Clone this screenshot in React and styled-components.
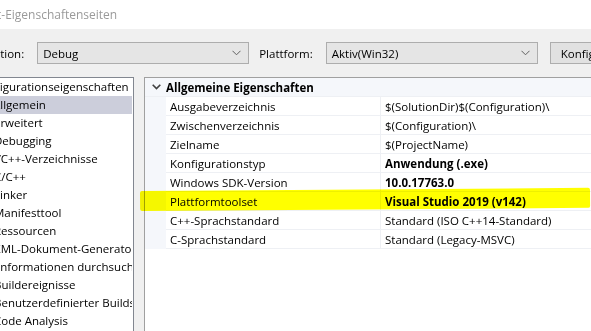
import styled, { createGlobalStyle } from "styled-components";

const GlobalStyle = createGlobalStyle`
  html, body {
    margin: 0;
    padding: 0;
    overflow: hidden;
    background: #ffffff;
  }
  * { box-sizing: border-box; }
`;

const Window = styled.div`
  position: relative;
  width: 591px;
  height: 331px;
  overflow: hidden;
  display: flex;
  flex-direction: column;
  font-family: "Open Sans", "Noto Sans", sans-serif;
  font-size: 11.5px;
  color: #000;
  background: #f0f0f0;
`;

const TitleBar = styled.div`
  height: 29px;
  flex: none;
  background: #fff;
  color: #9a9a9a;
  font-size: 12px;
  display: flex;
  align-items: center;
  white-space: nowrap;
  padding-bottom: 1px;
  overflow: hidden;
`;

const TitleText = styled.span`
  margin-left: -3px;
`;

const Toolbar = styled.div`
  height: 48px;
  flex: none;
  display: flex;
  align-items: center;
  white-space: nowrap;
`;

const Label = styled.span`
  margin-left: ${({ $shift }) => $shift || 0}px;
  margin-right: ${({ $gap }) => $gap}px;
`;

const Select = styled.div`
  width: 212px;
  height: 22px;
  flex: none;
  background: #e5e5e5;
  border: 1px solid #adadad;
  display: flex;
  align-items: center;
  justify-content: space-between;
  padding: 0 7px 0 5px;
  margin-right: ${({ $gap }) => $gap}px;
`;

const Button = styled.div`
  width: 80px;
  height: 22px;
  flex: none;
  background: #e1e1e1;
  border: 1px solid #adadad;
  display: flex;
  align-items: center;
  padding-left: 10px;
  overflow: hidden;
`;

const Body = styled.div`
  flex: 1;
  display: flex;
  gap: 10px;
  min-height: 0;
`;

const Tree = styled.div`
  width: 134px;
  flex: none;
  background: #fff;
  border-top: 1px solid #828790;
  border-right: 1px solid #828790;
  overflow: hidden;
  white-space: nowrap;
`;

const TreeItem = styled.div`
  height: 18px;
  line-height: 18px;
  text-indent: ${({ $indent }) => $indent}px;
  background: ${({ $selected }) => ($selected ? "#cccedb" : "transparent")};
  margin-right: 1px;
  overflow: hidden;
`;

const Grid = styled.div`
  flex: 1;
  background: #fff;
  border-top: 1px solid #a0a0a0;
  border-left: 1px solid #a0a0a0;
  display: flex;
  flex-direction: column;
  white-space: nowrap;
  overflow: hidden;
`;

const Category = styled.div`
  height: 19px;
  display: flex;
  align-items: center;
  background: #f5f7fb;
  font-weight: 700;
  border-bottom: 1px solid #eef0f4;
`;

const Caret = styled.div`
  width: 21px;
  display: flex;
  justify-content: center;
  padding-left: 2px;
`;

const Row = styled.div`
  height: 19px;
  display: flex;
  background: #f5f7fb;
`;

const Gutter = styled.div`
  width: 21px;
  flex: none;
`;

const Cell = styled.div`
  width: ${({ $w }) => ($w ? `${$w}px` : "auto")};
  flex: ${({ $w }) => ($w ? "none" : "1")};
  background: #fff;
  border-bottom: 1px solid #eef0f4;
  border-right: ${({ $sep }) => ($sep ? "1px solid #eef0f4" : "none")};
  padding-left: 4px;
  display: flex;
  align-items: center;
  font-weight: ${({ $bold }) => ($bold ? 700 : 400)};
`;

const Highlight = styled.div`
  position: absolute;
  left: 140px;
  top: 191px;
  width: 450px;
  height: 20px;
  background: #ffff00;
  mix-blend-mode: multiply;
  transform: rotate(-0.4deg);
  transform-origin: left top;
  border-radius: 2px;
  pointer-events: none;
`;

const Chevron = () => (
  <svg width="9" height="6" viewBox="0 0 9 6">
    <polyline points="0.5,0.8 4.5,4.8 8.5,0.8" fill="none" stroke="#606060" strokeWidth="1" />
  </svg>
);

const CaretIcon = () => (
  <svg width="9" height="6" viewBox="0 0 9 6">
    <polyline points="0.7,0.8 4.5,4.6 8.3,0.8" fill="none" stroke="#404040" strokeWidth="1.6" />
  </svg>
);

const treeItems = [
  { text: "Konfigurationseigenschaften", indent: -25 },
  { text: "Allgemein", indent: -7, selected: true },
  { text: "Erweitert", indent: -6 },
  { text: "Debugging", indent: -6 },
  { text: "VC++-Verzeichnisse", indent: -6 },
  { text: "C/C++", indent: -6 },
  { text: "Linker", indent: -6 },
  { text: "Manifesttool", indent: -6 },
  { text: "Ressourcen", indent: -6 },
  { text: "XML-Dokument-Generator", indent: -6 },
  { text: "Informationen durchsuchen", indent: -3 },
  { text: "Buildereignisse", indent: -6 },
  { text: "Benutzerdefinierter Buildschritt", indent: -6 },
  { text: "Code Analysis", indent: -6 },
];

const properties = [
  { name: "Ausgabeverzeichnis", value: "$(SolutionDir)$(Configuration)\\" },
  { name: "Zwischenverzeichnis", value: "$(Configuration)\\" },
  { name: "Zielname", value: "$(ProjectName)" },
  { name: "Konfigurationstyp", value: "Anwendung (.exe)", bold: true },
  { name: "Windows SDK-Version", value: "10.0.17763.0", bold: true },
  { name: "Plattformtoolset", value: "Visual Studio 2019 (v142)", bold: true },
  { name: "C++-Sprachstandard", value: "Standard (ISO C++14-Standard)" },
  { name: "C-Sprachstandard", value: "Standard (Legacy-MSVC)" },
];

export default function App() {
  return (
    <>
      <GlobalStyle />
      <Window>
        <TitleBar>
          <TitleText>t-Eigenschaftenseiten</TitleText>
        </TitleBar>
        <Toolbar>
          <Label $shift={-52} $gap={13}>Konfiguration:</Label>
          <Select $gap={10}>
            <span>Debug</span>
            <Chevron />
          </Select>
          <Label $gap={13}>Plattform:</Label>
          <Select $gap={12}>
            <span>Aktiv(Win32)</span>
            <Chevron />
          </Select>
          <Button>Konfigurations-Manager...</Button>
        </Toolbar>
        <Body>
          <Tree>
            {treeItems.map((item) => (
              <TreeItem key={item.text} $indent={item.indent} $selected={item.selected}>
                {item.text}
              </TreeItem>
            ))}
          </Tree>
          <Grid>
            <Category>
              <Caret>
                <CaretIcon />
              </Caret>
              Allgemeine Eigenschaften
            </Category>
            {properties.map((p) => (
              <Row key={p.name}>
                <Gutter />
                <Cell $w={215} $sep>{p.name}</Cell>
                <Cell $bold={p.bold}>{p.value}</Cell>
              </Row>
            ))}
          </Grid>
        </Body>
        <Highlight />
      </Window>
    </>
  );
}
